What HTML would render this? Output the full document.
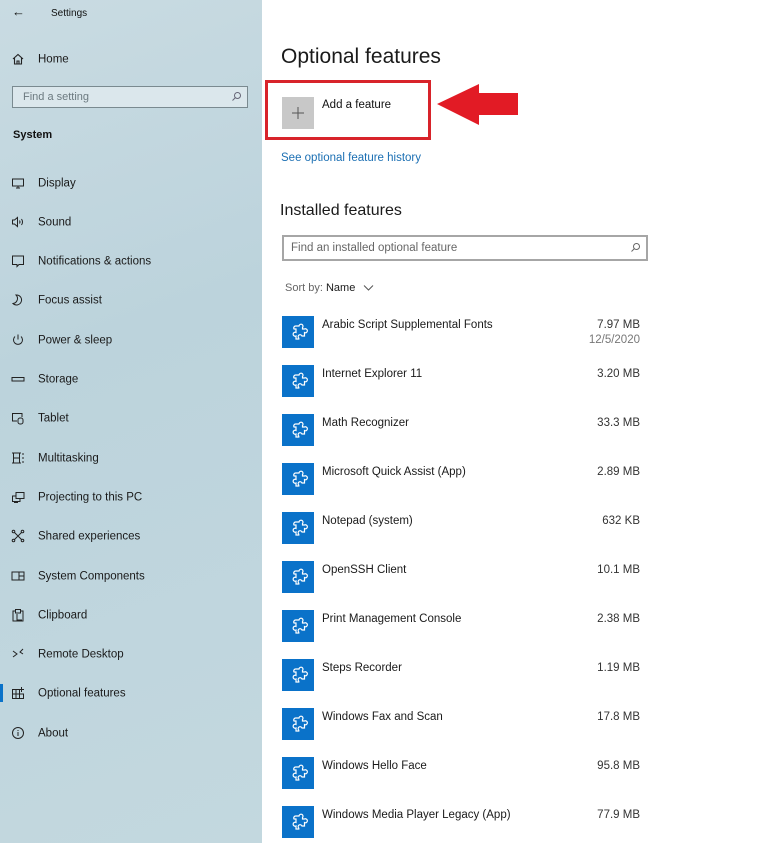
<!DOCTYPE html>
<html><head><meta charset="utf-8"><style>
*{margin:0;padding:0;box-sizing:border-box}
body{width:768px;height:843px;overflow:hidden;font-family:"Liberation Sans",sans-serif;background:#fff;position:relative;color:#111}
.side{position:absolute;left:0;top:0;width:262px;height:843px;background:linear-gradient(160deg,#c9dbe2 0%,#bcd3dc 40%,#c3d8df 100%)}
.a{position:absolute;white-space:nowrap}
.nav{position:absolute;left:38px;font-size:11.5px;color:#1a1a1a;transform:translateY(-45%)}
.ic{position:absolute;left:11px;width:14px;height:14px;transform:translateY(-50%)}
.row{position:absolute;left:282px;width:360px;height:40px}
.tile{position:absolute;left:0;top:0;width:32px;height:32px;background:#0a72c9}
.nm{position:absolute;left:40px;top:3px;font-size:11.5px;color:#1a1a1a}
.sz{position:absolute;right:2px;top:3px;font-size:11.5px;color:#333}
</style></head><body>
<div class="side">
<div class="a" style="left:12px;top:4px;font-size:13px">&#8592;</div>
<div class="a" style="left:51px;top:8px;font-size:10px">Settings</div>
<svg class="ic" style="top:59px" viewBox="0 0 14 14" fill="none" stroke="#222" stroke-width="1.1"><path d="M2 7L7 2.5 12 7M3.5 6v6h7V6M6 12V9h2v3"/></svg>
<div class="nav" style="top:59px">Home</div>
<div class="a" style="left:12px;top:86px;width:236px;height:22px;border:1.5px solid #7a8a90;background:#dbe7ec"></div>
<div class="a" style="left:23px;top:91px;font-size:11px;color:#6c7a80">Find a setting</div>
<svg class="a" style="left:231px;top:91px" width="11" height="11" viewBox="0 0 11 11" fill="none" stroke="#667" stroke-width="1"><circle cx="6.5" cy="4.5" r="3"/><path d="M4.5 6.5L1.5 9.5"/></svg>
<div class="a" style="left:13px;top:129px;font-size:11px;font-weight:bold">System</div>
<svg class="ic" style="top:183px" viewBox="0 0 14 14" fill="none" stroke="#222"><rect x="1.5" y="3" width="11" height="7"/><path d="M7 10v2M5 12h4"/></svg><div class="nav" style="top:183px">Display</div>
<svg class="ic" style="top:222px" viewBox="0 0 14 14" fill="none" stroke="#222"><path d="M1.5 5h2l3-2.5v9L3.5 9h-2zM8.5 5.5q1 1.5 0 3M10.5 4q2 3 0 6"/></svg><div class="nav" style="top:222px">Sound</div>
<svg class="ic" style="top:261px" viewBox="0 0 14 14" fill="none" stroke="#222"><path d="M1.5 2h11v8.5H8L6 12.5V10.5H1.5z"/></svg><div class="nav" style="top:261px">Notifications &amp; actions</div>
<svg class="ic" style="top:300px" viewBox="0 0 14 14" fill="none" stroke="#222"><path d="M5 2a5 5 0 1 1-3 8.5A5 5 0 0 0 5 2z"/></svg><div class="nav" style="top:300px">Focus assist</div>
<svg class="ic" style="top:340px" viewBox="0 0 14 14" fill="none" stroke="#222"><path d="M4 3.5a4.5 4.5 0 1 0 6 0M7 1.5v5"/></svg><div class="nav" style="top:340px">Power &amp; sleep</div>
<svg class="ic" style="top:379px" viewBox="0 0 14 14" fill="none" stroke="#222"><rect x="1" y="5.5" width="12" height="3.5"/></svg><div class="nav" style="top:379px">Storage</div>
<svg class="ic" style="top:418px" viewBox="0 0 14 14" fill="none" stroke="#222"><path d="M6 10H1.5V2.5H11V6"/><rect x="7" y="7" width="5" height="6" rx="2"/></svg><div class="nav" style="top:418px">Tablet</div>
<svg class="ic" style="top:458px" viewBox="0 0 14 14" fill="none" stroke="#222"><path d="M1 2h9M1 12h9M2.5 2v10M8.5 2v10M2.5 7h6M12 2v2M12 6v2M12 10v2"/></svg><div class="nav" style="top:458px">Multitasking</div>
<svg class="ic" style="top:497px" viewBox="0 0 14 14" fill="none" stroke="#222"><rect x="5" y="2.5" width="8" height="6"/><path d="M5 6H1.5v5.5H9V8.5M3 12.5h4"/></svg><div class="nav" style="top:497px">Projecting to this PC</div>
<svg class="ic" style="top:536px" viewBox="0 0 14 14" fill="none" stroke="#222"><circle cx="2.5" cy="2.5" r="1.3"/><circle cx="11.5" cy="2.5" r="1.3"/><circle cx="2.5" cy="11.5" r="1.3"/><circle cx="11.5" cy="11.5" r="1.3"/><path d="M3.5 3.5l7 7M10.5 3.5l-7 7"/></svg><div class="nav" style="top:536px">Shared experiences</div>
<svg class="ic" style="top:576px" viewBox="0 0 14 14" fill="none" stroke="#222"><rect x="1" y="3" width="12" height="8"/><path d="M8 3v8M8 7h5"/></svg><div class="nav" style="top:576px">System Components</div>
<svg class="ic" style="top:615px" viewBox="0 0 14 14" fill="none" stroke="#222"><path d="M4 3H2v10h10V3h-2M4.5 1.5h5V5h-5zM6 6v6h5"/></svg><div class="nav" style="top:615px">Clipboard</div>
<svg class="ic" style="top:654px" viewBox="0 0 14 14" fill="none" stroke="#222"><path d="M2 4l4 3-4 3M12 2L9 5l3 2"/></svg><div class="nav" style="top:654px">Remote Desktop</div>
<div class="a" style="left:0;top:684px;width:3px;height:18px;background:#0a72c9"></div>
<svg class="ic" style="top:693px" viewBox="0 0 14 14" fill="none" stroke="#222"><path d="M1.5 3.5h7v9h-7zM1.5 8h11v4.5H8.5M5 3.5v9M10.5 1v5M8 3.5h5"/></svg><div class="nav" style="top:693px">Optional features</div>
<svg class="ic" style="top:733px" viewBox="0 0 14 14" fill="none" stroke="#222"><circle cx="7" cy="7" r="5.5"/><path d="M7 6v4M7 4v1"/></svg><div class="nav" style="top:733px">About</div>
</div>

<div class="a" style="left:281px;top:45px;font-size:21px;color:#1a1a1a">Optional features</div>
<div class="a" style="left:265px;top:80px;width:166px;height:60px;border:3px solid #d8232a"></div>
<div class="a" style="left:282px;top:97px;width:32px;height:32px;background:#c8c8c8"></div>
<svg class="a" style="left:282px;top:97px" width="32" height="32"><path d="M16 10v12M10 16h12" stroke="#555" stroke-width="1"/></svg>
<div class="a" style="left:322px;top:99px;font-size:11.5px">Add a feature</div>
<svg class="a" style="left:430px;top:80px" width="95" height="50" viewBox="430 80 95 50"><path d="M437 104L479 84V93H518V115H479V125Z" fill="#e21b25"/></svg>
<div class="a" style="left:281px;top:152px;font-size:11.5px;color:#1b6fb3">See optional feature history</div>
<div class="a" style="left:280px;top:202px;font-size:16px;color:#1a1a1a">Installed features</div>
<div class="a" style="left:282px;top:235px;width:366px;height:26px;border:2px solid #a6a6a6"></div>
<div class="a" style="left:291px;top:242px;font-size:11.5px;color:#666">Find an installed optional feature</div>
<svg class="a" style="left:630px;top:242px" width="11" height="11" viewBox="0 0 11 11" fill="none" stroke="#666" stroke-width="1"><circle cx="6.5" cy="4.5" r="3"/><path d="M4.5 6.5L1.5 9.5"/></svg>
<div class="a" style="left:285px;top:282px;font-size:11px;color:#666">Sort by: <span style="color:#1a1a1a">Name</span></div>
<svg class="a" style="left:363px;top:284px" width="11" height="8" viewBox="0 0 11 8" fill="none" stroke="#555"><path d="M1 1.5l4.5 4.5L10 1.5"/></svg>

<svg width="0" height="0" style="position:absolute"><defs><symbol id="pz" viewBox="0 0 32 32"><path d="M14 10h3a2 2 0 1 1 3.5 1.5V13h2a2 2 0 1 1 0 3.6V20h-2.5a2 2 0 1 0-3.2 2.2V23H14v-3a2 2 0 1 1 0-3.6V13h-2a2 2 0 0 1 2-3z" fill="none" stroke="#fff" stroke-width="1.2"/></symbol></defs></svg>

<div class="row" style="top:316px"><div class="tile"><svg width="32" height="32"><use href="#pz"/></svg></div><div class="nm">Arabic Script Supplemental Fonts</div><div class="sz">7.97 MB</div><div class="sz" style="top:18px;color:#777">12/5/2020</div></div>
<div class="row" style="top:365px"><div class="tile"><svg width="32" height="32"><use href="#pz"/></svg></div><div class="nm">Internet Explorer 11</div><div class="sz">3.20 MB</div></div>
<div class="row" style="top:414px"><div class="tile"><svg width="32" height="32"><use href="#pz"/></svg></div><div class="nm">Math Recognizer</div><div class="sz">33.3 MB</div></div>
<div class="row" style="top:463px"><div class="tile"><svg width="32" height="32"><use href="#pz"/></svg></div><div class="nm">Microsoft Quick Assist (App)</div><div class="sz">2.89 MB</div></div>
<div class="row" style="top:512px"><div class="tile"><svg width="32" height="32"><use href="#pz"/></svg></div><div class="nm">Notepad (system)</div><div class="sz">632 KB</div></div>
<div class="row" style="top:561px"><div class="tile"><svg width="32" height="32"><use href="#pz"/></svg></div><div class="nm">OpenSSH Client</div><div class="sz">10.1 MB</div></div>
<div class="row" style="top:610px"><div class="tile"><svg width="32" height="32"><use href="#pz"/></svg></div><div class="nm">Print Management Console</div><div class="sz">2.38 MB</div></div>
<div class="row" style="top:659px"><div class="tile"><svg width="32" height="32"><use href="#pz"/></svg></div><div class="nm">Steps Recorder</div><div class="sz">1.19 MB</div></div>
<div class="row" style="top:708px"><div class="tile"><svg width="32" height="32"><use href="#pz"/></svg></div><div class="nm">Windows Fax and Scan</div><div class="sz">17.8 MB</div></div>
<div class="row" style="top:757px"><div class="tile"><svg width="32" height="32"><use href="#pz"/></svg></div><div class="nm">Windows Hello Face</div><div class="sz">95.8 MB</div></div>
<div class="row" style="top:806px"><div class="tile"><svg width="32" height="32"><use href="#pz"/></svg></div><div class="nm">Windows Media Player Legacy (App)</div><div class="sz">77.9 MB</div></div>
</body></html>
